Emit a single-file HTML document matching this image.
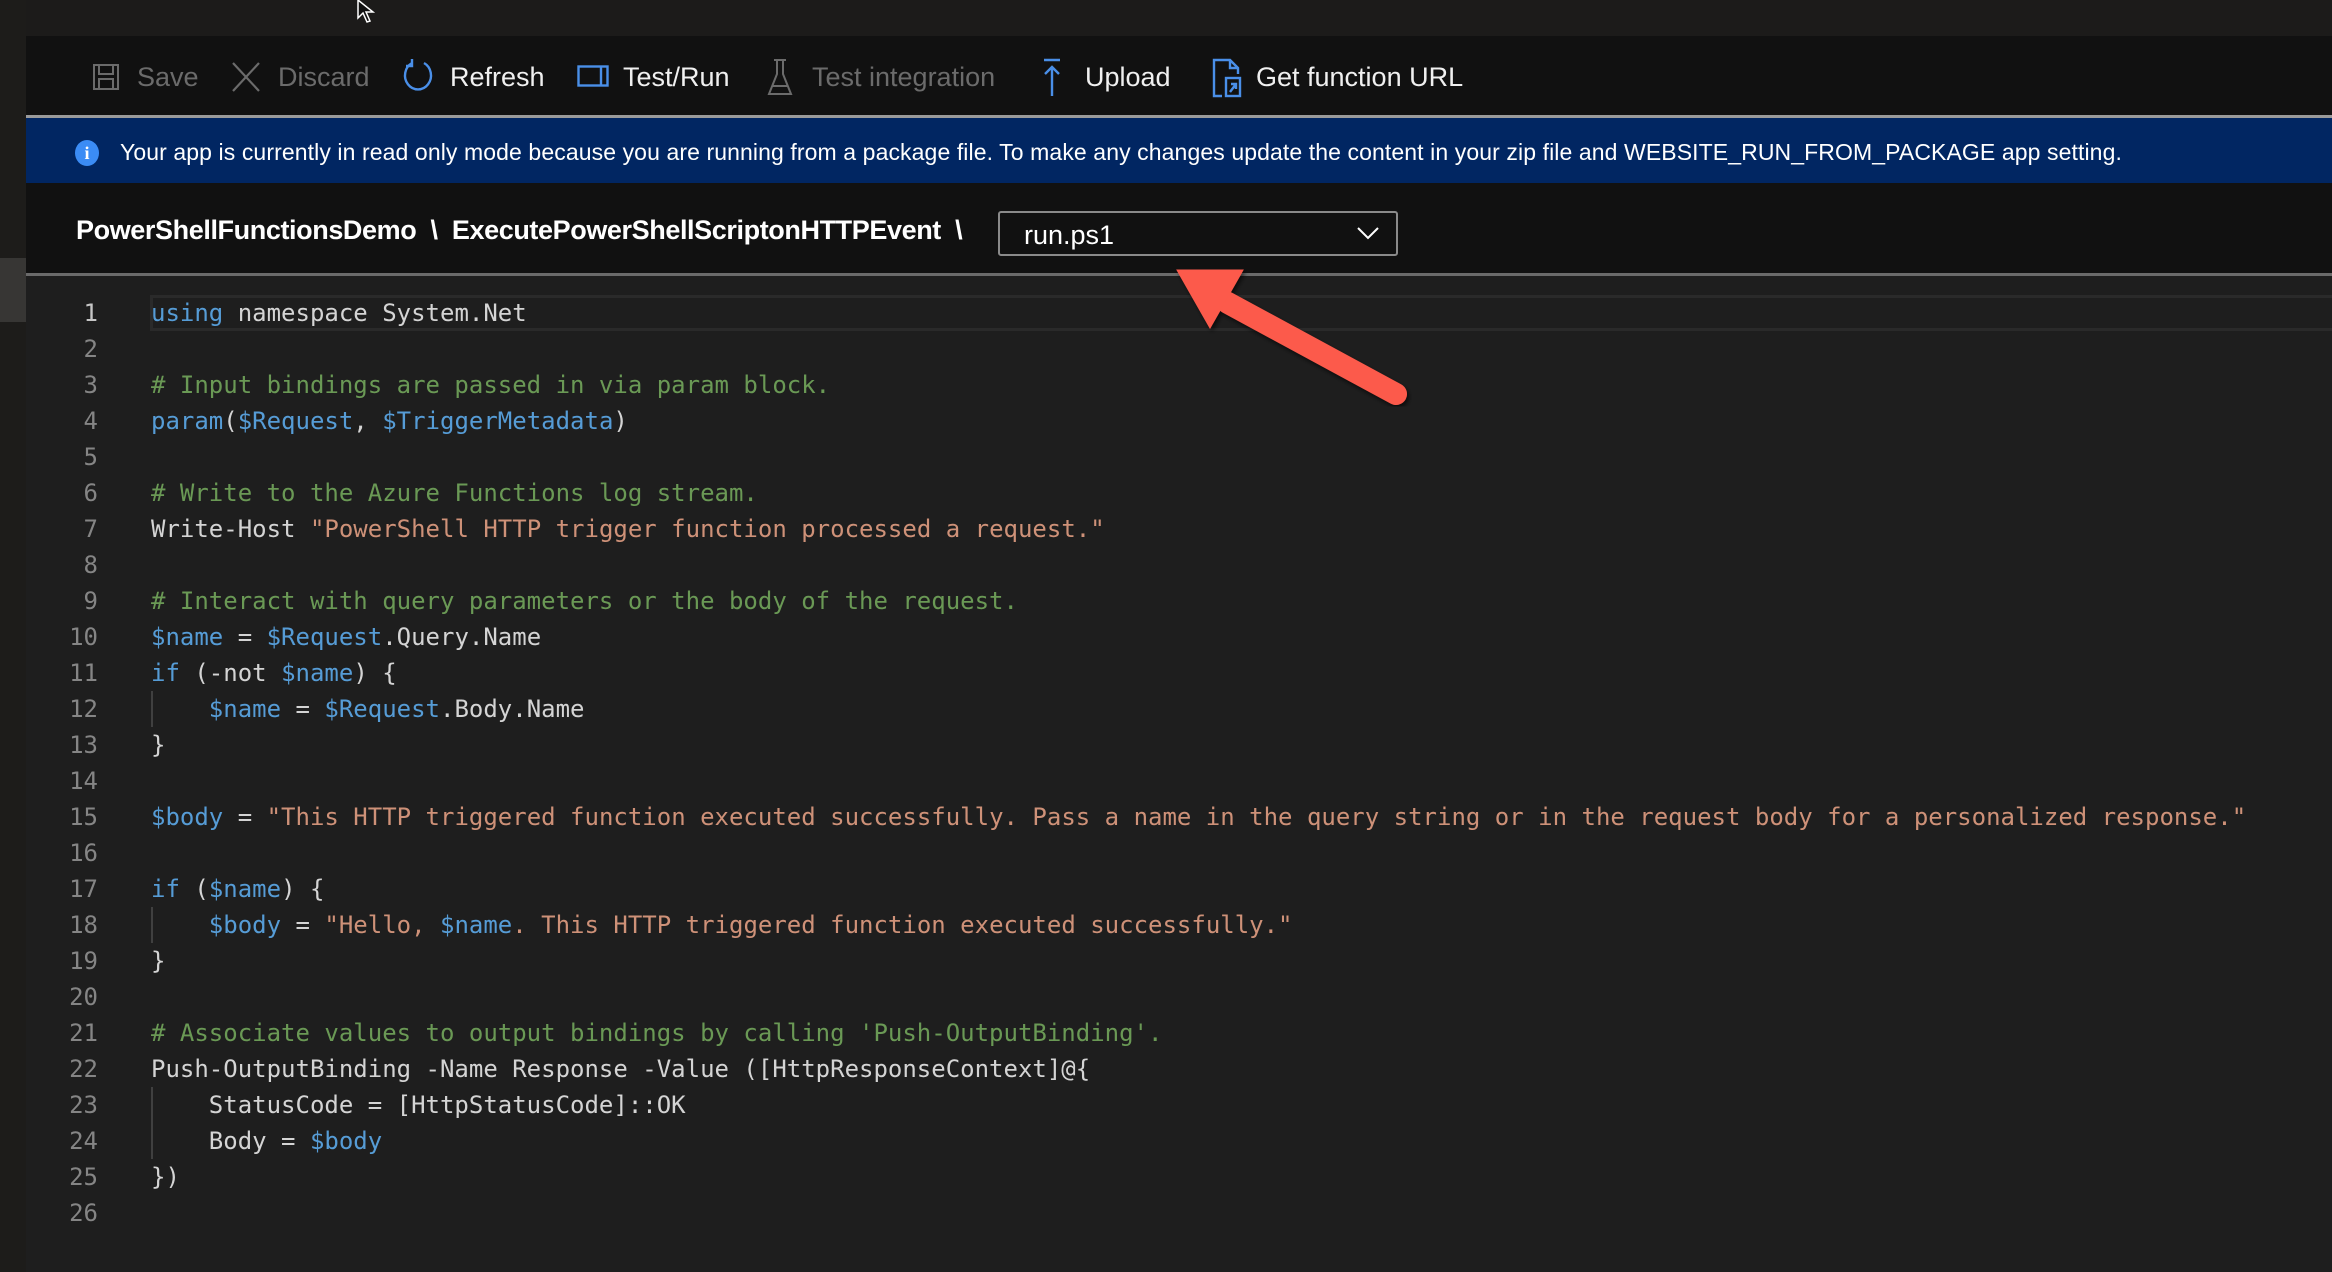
<!DOCTYPE html>
<html><head><meta charset="utf-8"><style>
*{margin:0;padding:0;box-sizing:border-box}
body{width:2332px;height:1272px;background:#1e1e1e;position:relative;overflow:hidden;font-family:"Liberation Sans",sans-serif}
.abs{position:absolute}
.tb{position:absolute;top:58px;font-size:27px;line-height:38px;white-space:nowrap}
.dis{color:#6b6b6b}.en{color:#f0f0f0}
.code{position:absolute;left:151px;top:295px;font-family:"DejaVu Sans Mono","Liberation Mono",monospace;font-size:24px;line-height:36px;color:#d4d4d4;white-space:pre}
.ln{position:absolute;left:30px;width:68px;top:295px;text-align:right;font-family:"DejaVu Sans Mono","Liberation Mono",monospace;font-size:24px;line-height:36px;color:#858585;white-space:pre}
.k{color:#569cd6}.c{color:#6a9955}.s{color:#ce9178}
.g{position:absolute;left:151px;width:2px;background:#404040}
</style></head><body>
<div class="abs" style="left:0;top:0;width:2332px;height:36px;background:#1c1b1a"></div>
<div class="abs" style="left:0;top:0;width:26px;height:1272px;background:#1d1c1a"></div>
<div class="abs" style="left:0;top:258px;width:26px;height:64px;background:#373634"></div>
<svg class="abs" style="left:356px;top:0" width="26" height="26" viewBox="0 0 26 26"><path d="M2 0 L2 18 L7 13 L11 22 L14 21 L10 12 L17 12 Z" fill="#111" stroke="#fff" stroke-width="1.5"/></svg>
<div class="abs" style="left:26px;top:36px;width:2306px;height:81px;background:#111"></div>
<div class="abs" style="left:26px;top:115px;width:2306px;height:3px;background:#9a9a9a"></div>
<svg class="abs" style="left:92px;top:63px" width="28" height="28" viewBox="0 0 28 28" fill="none" stroke="#6b6b6b" stroke-width="2"><rect x="2" y="2" width="24" height="24"/><rect x="7" y="2" width="14" height="9"/><rect x="7" y="16" width="14" height="10"/></svg>
<div class="tb dis" style="left:137px">Save</div>
<svg class="abs" style="left:230px;top:61px" width="32" height="32" viewBox="0 0 32 32" stroke="#6b6b6b" stroke-width="2.2"><path d="M3 2 L29 30 M29 2 L3 30"/></svg>
<div class="tb dis" style="left:278px">Discard</div>
<svg class="abs" style="left:402px;top:58px" width="32" height="38" viewBox="0 0 32 38" fill="none" stroke="#4a8fe8" stroke-width="2.4"><path d="M10 5 A13 14 0 1 0 22 5"/><path d="M10 1 L10 8 L4 8"/></svg>
<div class="tb en" style="left:450px">Refresh</div>
<svg class="abs" style="left:577px;top:65px" width="32" height="22" viewBox="0 0 32 22" fill="none" stroke="#4a8fe8" stroke-width="2.4"><rect x="1.5" y="1.5" width="29" height="19"/><path d="M24 1.5 V20.5"/></svg>
<div class="tb en" style="left:623px">Test/Run</div>
<svg class="abs" style="left:766px;top:58px" width="28" height="38" viewBox="0 0 28 38" fill="none" stroke="#6b6b6b" stroke-width="2"><path d="M8 2 H20 M11 2 V16 L3 36 H25 L17 16 V2"/><path d="M6 28 H22"/></svg>
<div class="tb dis" style="left:812px">Test integration</div>
<svg class="abs" style="left:1040px;top:58px" width="24" height="40" viewBox="0 0 24 40" fill="none" stroke="#4a8fe8" stroke-width="2.4"><path d="M4 2 H20 M12 38 V9 M5 16 L12 9 L19 16"/></svg>
<div class="tb en" style="left:1085px">Upload</div>
<svg class="abs" style="left:1212px;top:58px" width="30" height="40" viewBox="0 0 30 40" fill="none" stroke="#4a8fe8" stroke-width="2.4"><path d="M10 38 H2 V2 H18 L26 10 V16"/><path d="M18 2 V10 H26"/><rect x="14" y="20" width="14" height="18"/><path d="M18 34 L24 26 M19 26 H24 V31"/></svg>
<div class="tb en" style="left:1256px">Get function URL</div>
<div class="abs" style="left:26px;top:118px;width:2306px;height:65px;background:#012662"></div>
<div class="abs" style="left:75px;top:140px;width:24px;height:26px;border-radius:50%;background:#3b8cf5;color:#fff;font:bold 18px/26px 'Liberation Serif',serif;text-align:center">i</div>
<div class="abs" style="left:120px;top:138px;font-size:23px;letter-spacing:0.1px;line-height:28px;color:#fff;white-space:nowrap">Your app is currently in read only mode because you are running from a package file. To make any changes update the content in your zip file and WEBSITE_RUN_FROM_PACKAGE app setting.</div>
<div class="abs" style="left:26px;top:183px;width:2306px;height:90px;background:#111"></div>
<div class="abs" style="left:26px;top:273px;width:2306px;height:3px;background:#6a6a6a"></div>
<div class="abs" style="left:76px;top:213px;font-size:27px;font-weight:bold;line-height:34px;color:#fff;white-space:nowrap;letter-spacing:-0.4px">PowerShellFunctionsDemo&nbsp;&nbsp;\&nbsp;&nbsp;ExecutePowerShellScriptonHTTPEvent&nbsp;&nbsp;\</div>
<div class="abs" style="left:998px;top:211px;width:400px;height:45px;border:2px solid #8a8a8a;border-radius:3px;background:#111"></div>
<div class="abs" style="left:1024px;top:218px;font-size:27px;line-height:34px;color:#fff">run.ps1</div>
<svg class="abs" style="left:1356px;top:225px" width="24" height="16" viewBox="0 0 24 16" fill="none" stroke="#fff" stroke-width="2"><path d="M2 3 L12 13 L22 3"/></svg>
<div class="abs" style="left:150px;top:295px;width:2182px;height:36px;border:3px solid #2a2a2a;border-right:none"></div>
<div class="g" style="top:691px;height:36px"></div>
<div class="g" style="top:907px;height:36px"></div>
<div class="g" style="top:1087px;height:72px"></div>
<div class="ln"><span style="color:#c6c6c6">1</span>
2
3
4
5
6
7
8
9
10
11
12
13
14
15
16
17
18
19
20
21
22
23
24
25
26</div>
<div class="code"><span class="k">using</span> namespace System.Net

<span class="c"># Input bindings are passed in via param block.</span>
<span class="k">param</span>(<span class="k">$Request</span>, <span class="k">$TriggerMetadata</span>)

<span class="c"># Write to the Azure Functions log stream.</span>
Write-Host <span class="s">"PowerShell HTTP trigger function processed a request."</span>

<span class="c"># Interact with query parameters or the body of the request.</span>
<span class="k">$name</span> = <span class="k">$Request</span>.Query.Name
<span class="k">if</span> (-not <span class="k">$name</span>) {
    <span class="k">$name</span> = <span class="k">$Request</span>.Body.Name
}

<span class="k">$body</span> = <span class="s">"This HTTP triggered function executed successfully. Pass a name in the query string or in the request body for a personalized response."</span>

<span class="k">if</span> (<span class="k">$name</span>) {
    <span class="k">$body</span> = <span class="s">"Hello, </span><span class="k">$name</span><span class="s">. This HTTP triggered function executed successfully."</span>
}

<span class="c"># Associate values to output bindings by calling 'Push-OutputBinding'.</span>
Push-OutputBinding -Name Response -Value ([HttpResponseContext]@{
    StatusCode = [HttpStatusCode]::OK
    Body = <span class="k">$body</span>
})
</div>
<svg class="abs" style="left:1150px;top:250px" width="280" height="170" viewBox="1150 250 280 170">
<defs><filter id="sh"><feDropShadow dx="2" dy="3" stdDeviation="2" flood-color="#000" flood-opacity="0.6"/></filter></defs>
<g filter="url(#sh)" fill="#fc5a4b" stroke="#fc5a4b">
<path d="M1228 303 L1396 394" stroke-width="22" stroke-linecap="round"/>
<path d="M1177 270 L1243 270 L1210 328 Z" stroke-width="1"/>
</g></svg>
</body></html>
